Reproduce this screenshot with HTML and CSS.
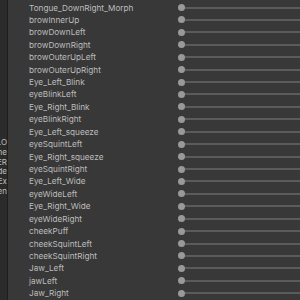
FILE: index.html
```html
<!DOCTYPE html>
<html lang="en">
  <head>
    <meta charset="UTF-8">
    <title>Blend Shapes</title>
    <link rel="stylesheet" href="styles.css">
  </head>
  <body>
    <div class="window">
      <div class="side">
        <div class="side-list">
          <div>LOD Group LO</div>
          <div>Name</div>
          <div>RENDERER</div>
          <div>Mode</div>
          <div>Shadow Ex</div>
          <div>Open</div>
        </div>
      </div>
      <div class="shapes">
        <div class="shape-list">
          <div class="row"><span class="name">Tongue_DownLeft_Morph</span><span class="slider"><i class="knob"></i><i class="track"></i></span></div>
          <div class="row"><span class="name">Tongue_DownRight_Morph</span><span class="slider"><i class="knob"></i><i class="track"></i></span></div>
          <div class="row"><span class="name">browInnerUp</span><span class="slider"><i class="knob"></i><i class="track"></i></span></div>
          <div class="row"><span class="name">browDownLeft</span><span class="slider"><i class="knob"></i><i class="track"></i></span></div>
          <div class="row"><span class="name">browDownRight</span><span class="slider"><i class="knob"></i><i class="track"></i></span></div>
          <div class="row"><span class="name">browOuterUpLeft</span><span class="slider"><i class="knob"></i><i class="track"></i></span></div>
          <div class="row"><span class="name">browOuterUpRight</span><span class="slider"><i class="knob"></i><i class="track"></i></span></div>
          <div class="row"><span class="name">Eye_Left_Blink</span><span class="slider"><i class="knob"></i><i class="track"></i></span></div>
          <div class="row"><span class="name">eyeBlinkLeft</span><span class="slider"><i class="knob"></i><i class="track"></i></span></div>
          <div class="row"><span class="name">Eye_Right_Blink</span><span class="slider"><i class="knob"></i><i class="track"></i></span></div>
          <div class="row"><span class="name">eyeBlinkRight</span><span class="slider"><i class="knob"></i><i class="track"></i></span></div>
          <div class="row"><span class="name">Eye_Left_squeeze</span><span class="slider"><i class="knob"></i><i class="track"></i></span></div>
          <div class="row"><span class="name">eyeSquintLeft</span><span class="slider"><i class="knob"></i><i class="track"></i></span></div>
          <div class="row"><span class="name">Eye_Right_squeeze</span><span class="slider"><i class="knob"></i><i class="track"></i></span></div>
          <div class="row"><span class="name">eyeSquintRight</span><span class="slider"><i class="knob"></i><i class="track"></i></span></div>
          <div class="row"><span class="name">Eye_Left_Wide</span><span class="slider"><i class="knob"></i><i class="track"></i></span></div>
          <div class="row"><span class="name">eyeWideLeft</span><span class="slider"><i class="knob"></i><i class="track"></i></span></div>
          <div class="row"><span class="name">Eye_Right_Wide</span><span class="slider"><i class="knob"></i><i class="track"></i></span></div>
          <div class="row"><span class="name">eyeWideRight</span><span class="slider"><i class="knob"></i><i class="track"></i></span></div>
          <div class="row"><span class="name">cheekPuff</span><span class="slider"><i class="knob"></i><i class="track"></i></span></div>
          <div class="row"><span class="name">cheekSquintLeft</span><span class="slider"><i class="knob"></i><i class="track"></i></span></div>
          <div class="row"><span class="name">cheekSquintRight</span><span class="slider"><i class="knob"></i><i class="track"></i></span></div>
          <div class="row"><span class="name">Jaw_Left</span><span class="slider"><i class="knob"></i><i class="track"></i></span></div>
          <div class="row"><span class="name">jawLeft</span><span class="slider"><i class="knob"></i><i class="track"></i></span></div>
          <div class="row"><span class="name">Jaw_Right</span><span class="slider"><i class="knob"></i><i class="track"></i></span></div>
          <div class="row"><span class="name">jawRight</span><span class="slider"><i class="knob"></i><i class="track"></i></span></div>
        </div>
      </div>
    </div>
  </body>
</html>
```
FILE: styles.css
```css
*{
margin:0;
padding:0;
box-sizing:border-box;
}

body{
    background-color:#383838;
    color:#bdbdbd;
    font-family:Inter, "Liberation Sans", sans-serif;
    font-size:8.2px;
    overflow:hidden;
}

.window{
    display:flex;
    width:300px;
    height:300px;
    overflow:hidden;
}

.side{
    width:8px;
    flex:none;
    background-color:#2b2b2b;
    border-right:1px solid #1e1e1e;
    overflow:hidden;
    display:flex;
    justify-content:flex-end;
}

.side-list{
    flex:none;
    padding-top:138px;
    text-align:right;
    line-height:9.8px;
    font-size:8px;
    white-space:nowrap;
}

.shapes{
    flex:1;
    overflow:hidden;
}

.shape-list{
    margin-top:-11.1px;
}

.row{
    display:flex;
    align-items:center;
    height:12.43px;
    padding-left:21px;
}

.name{
    width:149px;
    flex:none;
    white-space:nowrap;
}

.slider{
    flex:1;
    display:flex;
    align-items:center;
}

.knob{
    width:7px;
    height:7px;
    border-radius:50%;
    background-color:#999;
    flex:none;
}

.track{
    flex:1;
    height:2px;
    background-color:#5b5b5b;
}
```
